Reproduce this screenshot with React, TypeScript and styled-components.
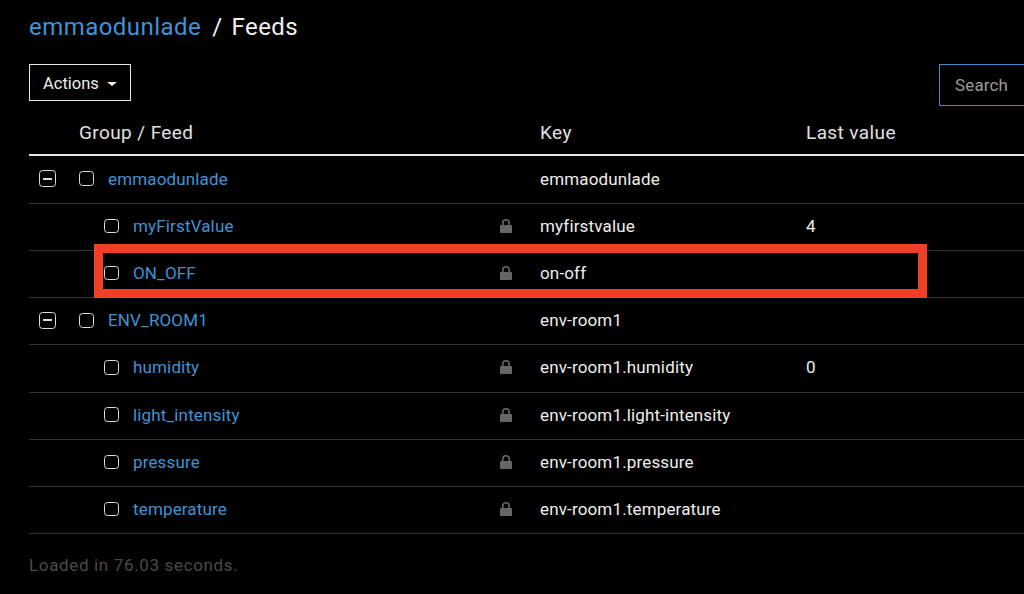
import React from 'react';
import styled, { createGlobalStyle } from 'styled-components';

const GlobalStyle = createGlobalStyle`
  html, body {
    margin: 0;
    height: 100%;
    background: #000;
    overflow: hidden;
  }
`;

const Page = styled.div`
  position: relative;
  width: 1100px;
  height: 594px;
  padding: 0 0 0 29px;
  box-sizing: border-box;
  background: #000;
  color: #e8e8e8;
  font-family: 'Roboto', 'Liberation Sans', sans-serif;
  letter-spacing: 0.15px;
`;

const Title = styled.h1`
  margin: 0;
  padding-top: 12px;
  height: 53px;
  box-sizing: border-box;
  font-size: 24px;
  line-height: 30px;
  font-weight: 400;
  letter-spacing: 0.45px;
  color: #f0f0f0;
`;

const TitleLink = styled.span`
  color: #3d94d6;
`;

const Slash = styled.span`
  margin: 0 9px 0 11px;
`;

const Toolbar = styled.div`
  display: flex;
  align-items: flex-start;
  justify-content: space-between;
  height: 55px;
  padding-top: 11px;
  box-sizing: border-box;
`;

const ActionsButton = styled.button`
  display: flex;
  align-items: center;
  gap: 8px;
  width: 102px;
  height: 37px;
  padding: 1px 0 0 13px;
  box-sizing: border-box;
  border: 1px solid #e8e8e8;
  background: none;
  color: #eee;
  font: inherit;
  font-size: 16.5px;
`;

const Caret = styled.span`
  margin-top: 2px;
  border-top: 4px solid #eee;
  border-left: 5px solid transparent;
  border-right: 5px solid transparent;
`;

const Search = styled.div`
  width: 161px;
  height: 42px;
  margin-left: -1px;
  padding-left: 15px;
  box-sizing: border-box;
  border: 1px solid #3d8fc4;
  color: #9a9a9a;
  font-size: 17px;
  line-height: 41px;
`;

const Columns = styled.div`
  display: grid;
  grid-template-columns: 50px 461px 266px 1fr;
  align-items: center;
  box-sizing: border-box;
`;

const HeadRow = styled(Columns)`
  height: 48px;
  padding-top: 2px;
  border-bottom: 2px solid #e4e4e4;
  color: #e0e0e0;
  font-size: 19px;
  letter-spacing: 0.4px;
`;

const Row = styled(Columns)<{ $first?: boolean }>`
  height: ${(p) => (p.$first ? '48px' : '47.15px')};
  padding-bottom: 2px;
  border-bottom: 1px solid #333;
  color: #eee;
  font-size: 17px;
`;

const ToggleCell = styled.div`
  padding-left: 10px;
  display: flex;
`;

const NameCell = styled.div<{ $child?: boolean }>`
  display: flex;
  align-items: center;
  padding-left: ${(p) => (p.$child ? '25px' : '0')};
`;

const Check = styled.span`
  width: 12.5px;
  height: 12.5px;
  border: 1.5px solid #dcdcdc;
  border-radius: 3.5px;
  flex: none;
`;

const Toggle = styled.span`
  position: relative;
  width: 15px;
  height: 15px;
  border: 1.5px solid #dcdcdc;
  border-radius: 3.5px;
  &::after {
    content: '';
    position: absolute;
    left: 3px;
    right: 3px;
    top: 6.5px;
    height: 2px;
    background: #dcdcdc;
  }
`;

const NameLink = styled.span`
  margin-left: 14.5px;
  color: #3d94d6;
`;

const LockIcon = styled.svg`
  margin-left: auto;
  margin-right: 28px;
  width: 12px;
  height: 14px;
  fill: #666;
`;

const Footer = styled.div`
  margin-top: 21px;
  font-size: 17px;
  line-height: 20px;
  letter-spacing: 0.65px;
  color: #4a4a4a;
`;

const Highlight = styled.div`
  position: absolute;
  left: 94px;
  top: 244px;
  width: 833px;
  height: 54px;
  box-sizing: border-box;
  border: 9.5px solid #ee4026;
  pointer-events: none;
`;

const Lock = () => (
  <LockIcon viewBox="0 0 12 14">
    <path d="M1 6h1V4a4 4 0 0 1 8 0v2h1a1 1 0 0 1 1 1v6a1 1 0 0 1-1 1H1a1 1 0 0 1-1-1V7a1 1 0 0 1 1-1zm2.6 0h4.8V4a2.4 2.4 0 0 0-4.8 0z" />
  </LockIcon>
);

type Item = { name: string; feedKey: string; value?: string; group?: boolean };

const items: Item[] = [
  { name: 'emmaodunlade', feedKey: 'emmaodunlade', group: true },
  { name: 'myFirstValue', feedKey: 'myfirstvalue', value: '4' },
  { name: 'ON_OFF', feedKey: 'on-off' },
  { name: 'ENV_ROOM1', feedKey: 'env-room1', group: true },
  { name: 'humidity', feedKey: 'env-room1.humidity', value: '0' },
  { name: 'light_intensity', feedKey: 'env-room1.light-intensity' },
  { name: 'pressure', feedKey: 'env-room1.pressure' },
  { name: 'temperature', feedKey: 'env-room1.temperature' },
];

export default function App() {
  return (
    <Page>
      <GlobalStyle />
      <Title>
        <TitleLink>emmaodunlade</TitleLink>
        <Slash>/</Slash>
        Feeds
      </Title>
      <Toolbar>
        <ActionsButton>
          Actions <Caret />
        </ActionsButton>
        <Search>Search</Search>
      </Toolbar>
      <HeadRow>
        <div />
        <div>Group / Feed</div>
        <div>Key</div>
        <div>Last value</div>
      </HeadRow>
      {items.map((item, i) => (
        <Row key={item.feedKey} $first={i === 0}>
          <ToggleCell>{item.group && <Toggle />}</ToggleCell>
          <NameCell $child={!item.group}>
            <Check />
            <NameLink>{item.name}</NameLink>
            {!item.group && <Lock />}
          </NameCell>
          <div>{item.feedKey}</div>
          <div>{item.value}</div>
        </Row>
      ))}
      <Footer>Loaded in 76.03 seconds.</Footer>
      <Highlight />
    </Page>
  );
}
